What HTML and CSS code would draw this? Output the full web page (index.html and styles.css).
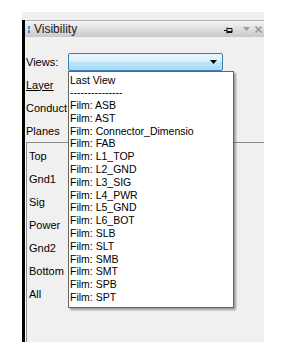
FILE: index.html
```html
<!DOCTYPE html>
<html>
<head>
<meta charset="utf-8">
<link rel="stylesheet" href="styles.css">
</head>
<body>
<div class="frame">
  <div class="panel">
    <div class="titlebar">
      <span class="grip"><i></i><i></i></span>
      <span class="title">Visibility</span>
      <span class="tools">
        <svg class="pin" width="9" height="7" viewBox="0 0 9 7"><path d="M0 3.5H3M3 0.5V6.5M3 1.5H8V5.5H3M3 4.5H8" stroke="#111" stroke-width="1" fill="none"/></svg>
        <svg class="menu" width="7" height="4" viewBox="0 0 7 4"><path d="M0 0H7L3.5 4Z" fill="#9a9a9a"/></svg>
        <svg class="close" width="7" height="7" viewBox="0 0 7 7"><path d="M0.5 0.5L6.5 6.5M6.5 0.5L0.5 6.5" stroke="#9a9a9a" stroke-width="1.6"/></svg>
      </span>
    </div>
    <div class="body">
      <div class="row views">
        <span class="lbl">Views:</span>
        <div class="combo">
          <svg class="arrow" width="7" height="4" viewBox="0 0 7 4"><path d="M0 0H7L3.5 4Z" fill="#000"/></svg>
          <div class="droplist">
            <div>Last View</div>
            <div>---------------</div>
            <div>Film: ASB</div>
            <div>Film: AST</div>
            <div>Film: Connector_Dimensio</div>
            <div>Film: FAB</div>
            <div>Film: L1_TOP</div>
            <div>Film: L2_GND</div>
            <div>Film: L3_SIG</div>
            <div>Film: L4_PWR</div>
            <div>Film: L5_GND</div>
            <div>Film: L6_BOT</div>
            <div>Film: SLB</div>
            <div>Film: SLT</div>
            <div>Film: SMB</div>
            <div>Film: SMT</div>
            <div>Film: SPB</div>
            <div>Film: SPT</div>
          </div>
        </div>
      </div>
      <div class="row"><span class="lbl u">Layer</span></div>
      <div class="row"><span class="lbl clip">Conductor</span></div>
      <div class="row"><span class="lbl">Planes</span></div>
      <div class="listbox">
        <div>Top</div>
        <div>Gnd1</div>
        <div>Sig</div>
        <div>Power</div>
        <div>Gnd2</div>
        <div>Bottom</div>
        <div>All</div>
      </div>
    </div>
  </div>
</div>
</body>
</html>
```
FILE: styles.css
```css
html, body {
  margin: 0;
  padding: 0;
  background: #ffffff;
}
body {
  font-family: "Liberation Sans", Arial, sans-serif;
  font-size: 11px;
  color: #000;
}
.frame {
  margin: 12px 0 0 22px;
  width: 242px;
  height: 330px;
  background: #f0f0f0;
  padding-top: 8px;
  box-sizing: border-box;
  overflow: hidden;
}
.panel {
  border-left: 3px solid #000;
  height: 100%;
  box-sizing: border-box;
}
.titlebar {
  height: 17px;
  display: flex;
  align-items: center;
  background: linear-gradient(#f6f6f6, #dcdcdc 55%, #c8c8c8);
  border-top: 1px solid #b4b4b4;
  box-sizing: border-box;
}
.grip {
  display: flex;
  flex-direction: column;
  gap: 1px;
  margin-left: 3px;
  width: 2px;
}
.grip i {
  display: block;
  width: 2px;
  height: 3px;
  background: #3a8ee6;
}
.title {
  margin-left: 4px;
  font-size: 12px;
  color: #1a1a1a;
}
.tools {
  margin-left: auto;
  display: flex;
  align-items: center;
  margin-right: 2px;
}
.pin { margin-right: 10px; margin-top: 2px; }
.menu { margin-right: 5px; }
.body {
  padding-top: 13px;
  padding-left: 1px;
}
.row {
  height: 23px;
  display: flex;
  align-items: center;
  white-space: nowrap;
}
.lbl.u { text-decoration: underline; }
.lbl.clip {
  display: block;
  width: 41px;
  overflow: hidden;
}
.views .lbl { width: 42px; }
.combo {
  position: relative;
  width: 155px;
  height: 18px;
  box-sizing: border-box;
  border: 1px solid #3c7fb1;
  border-radius: 2px;
  background: linear-gradient(#eaf6fd, #d9f0fc 45%, #bee6fd 50%, #a7d9f5);
}
.arrow {
  position: absolute;
  right: 5px;
  top: 6px;
}
.droplist {
  position: absolute;
  left: -1px;
  top: 17px;
  width: 166px;
  box-sizing: border-box;
  background: #fff;
  border: 1px solid #646464;
  padding: 2px 0 3px 1px;
  box-shadow: 2px 2px 2px rgba(0,0,0,0.35);
  z-index: 2;
  font-size: 10.5px;
}
.droplist div {
  height: 12.8px;
  line-height: 13px;
  white-space: nowrap;
}
.listbox {
  border-top: 1px solid #8c8c8c;
  border-left: 1px solid #8c8c8c;
  box-shadow: -1px 0 0 #ffffff;
  height: 260px;
  padding: 2px 0 0 2px;
}
.listbox div {
  height: 23px;
  line-height: 23px;
}
```
